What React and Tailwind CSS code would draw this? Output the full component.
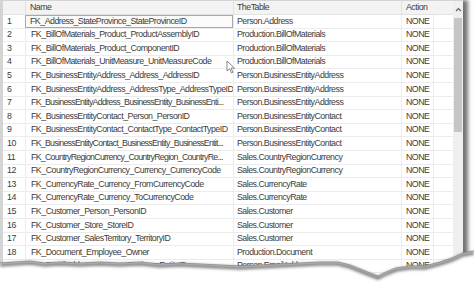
import React from 'react';

const rows = [
  ['FK_Address_StateProvince_StateProvinceID', 'Person.Address'],
  ['FK_BillOfMaterials_Product_ProductAssemblyID', 'Production.BillOfMaterials'],
  ['FK_BillOfMaterials_Product_ComponentID', 'Production.BillOfMaterials'],
  ['FK_BillOfMaterials_UnitMeasure_UnitMeasureCode', 'Production.BillOfMaterials'],
  ['FK_BusinessEntityAddress_Address_AddressID', 'Person.BusinessEntityAddress'],
  ['FK_BusinessEntityAddress_AddressType_AddressTypeID', 'Person.BusinessEntityAddress'],
  ['FK_BusinessEntityAddress_BusinessEntity_BusinessEnti...', 'Person.BusinessEntityAddress'],
  ['FK_BusinessEntityContact_Person_PersonID', 'Person.BusinessEntityContact'],
  ['FK_BusinessEntityContact_ContactType_ContactTypeID', 'Person.BusinessEntityContact'],
  ['FK_BusinessEntityContact_BusinessEntity_BusinessEntit...', 'Person.BusinessEntityContact'],
  ['FK_CountryRegionCurrency_CountryRegion_CountryRe...', 'Sales.CountryRegionCurrency'],
  ['FK_CountryRegionCurrency_Currency_CurrencyCode', 'Sales.CountryRegionCurrency'],
  ['FK_CurrencyRate_Currency_FromCurrencyCode', 'Sales.CurrencyRate'],
  ['FK_CurrencyRate_Currency_ToCurrencyCode', 'Sales.CurrencyRate'],
  ['FK_Customer_Person_PersonID', 'Sales.Customer'],
  ['FK_Customer_Store_StoreID', 'Sales.Customer'],
  ['FK_Customer_SalesTerritory_TerritoryID', 'Sales.Customer'],
  ['FK_Document_Employee_Owner', 'Production.Document'],
  ['FK_EmailAddress_Person_BusinessEntityID', 'Person.EmailAddress'],
];

// torn paper edge along the bottom, coords relative to the svg (top = 240)
const edge = [
  [0, 23], [15, 22], [30, 21], [45, 23], [60, 22], [80, 23], [100, 22], [120, 23],
  [140, 22], [160, 24], [180, 23], [200, 24], [220, 25], [240, 26], [260, 25],
  [280, 24], [300, 23], [320, 22], [338, 22], [350, 25], [360, 29], [370, 33],
  [378, 36], [386, 32], [396, 28], [410, 26], [425, 26], [440, 22], [452, 18],
  [463, 13], [474, 11],
];
const edgePts = edge.map((p) => p.join(',')).join(' ');

const App = () => {
  return (
    <div className="relative w-[474px] h-[296px] overflow-hidden bg-white font-['Liberation_Sans',sans-serif] text-[8.8px] tracking-[-0.5px] text-[#3c3c3c]">
      <div className="flex w-[463px] h-[280px] border-l-[3px] border-t border-[#d4d4d4] bg-white shadow-[5px_0_4px_rgba(0,0,0,0.55)]">
        <div className="flex-1">
          <div className="flex h-[14px] items-center bg-[#f3f3f3] border-b border-[#e2e2e2]">
            <div className="w-[22px]" />
            <div className="w-[208px] pl-[4px] border-l border-[#e2e2e2]">Name</div>
            <div className="w-[168px] pl-[3px] border-l border-[#e2e2e2]">TheTable</div>
            <div className="w-[33px] pl-[4px] border-l border-[#e2e2e2]">Action</div>
          </div>
          {rows.map(([name, table], i) => (
            <div key={i} className="flex h-[13.6px] items-center border-b border-[#ececec]">
              <div className="w-[22px] pl-[4px]">{i + 1}</div>
              <div
                className={
                  i === 0
                    ? 'w-[208px] h-full flex items-center pl-[4px] border border-[#a8a8a8] bg-[#fafafa] whitespace-nowrap overflow-hidden'
                    : 'w-[208px] h-full flex items-center pl-[5px] border-l border-[#ececec] whitespace-nowrap overflow-hidden'
                }
              >
                <span className={name.endsWith('...') ? 'tracking-[-0.72px]' : ''}>{name}</span>
              </div>
              <div className="w-[168px] h-full flex items-center pl-[3px] border-l border-[#ececec] whitespace-nowrap overflow-hidden">
                {table}
              </div>
              <div className="w-[33px] h-full flex items-center pl-[4px] border-l border-r border-[#ececec]">NONE</div>
            </div>
          ))}
        </div>
        <div className="flex w-[10px] flex-col bg-[#efefef]">
          <div className="flex h-[17px] items-center justify-center">
            <svg width="7" height="5" viewBox="0 0 7 5">
              <path d="M1 4 L3.5 1.5 L6 4" fill="none" stroke="#606060" strokeWidth="1.2" />
            </svg>
          </div>
          <div className="mx-[1px] h-[114px] bg-[#c6c6c6]" />
        </div>
      </div>

      {/* mouse pointer */}
      <svg className="absolute left-[226px] top-[60px]" width="10" height="14" viewBox="0 0 10 14">
        <path d="M1 1 L1 11 L3.5 8.8 L5.5 13 L7 12.3 L5 8.2 L8.5 8.2 Z" fill="#fff" stroke="#7a7a7a" strokeWidth="0.9" />
      </svg>

      {/* torn edge */}
      <svg className="absolute left-0 top-[240px]" width="474" height="56" viewBox="0 0 474 56">
        <defs>
          <filter id="blur" x="-10%" y="-50%" width="120%" height="200%">
            <feGaussianBlur stdDeviation="1.6" />
          </filter>
        </defs>
        <polygon points={`${edgePts} 474,56 0,56`} fill="#fff" />
        <polyline points={edgePts} transform="translate(0,2)" fill="none" stroke="#6e6e6e" strokeWidth="3" filter="url(#blur)" />
        <polyline points={edgePts} fill="none" stroke="#8a8a8a" strokeWidth="0.8" />
      </svg>
    </div>
  );
};

export default App;
